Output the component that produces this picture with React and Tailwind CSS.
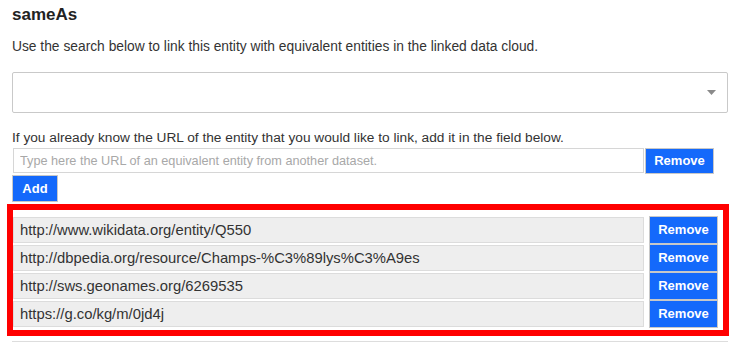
import React, { useState } from 'react'

const links = [
  'http://www.wikidata.org/entity/Q550',
  'http://dbpedia.org/resource/Champs-%C3%89lys%C3%A9es',
  'http://sws.geonames.org/6269535',
  'https://g.co/kg/m/0jd4j',
]

function BlueButton({ children, className = '', onClick }) {
  return (
    <button
      type="button"
      onClick={onClick}
      className={`flex items-center justify-center border border-[#c8c8c8] bg-[#1469fb] text-[13px] font-semibold text-white ${className}`}
    >
      {children}
    </button>
  )
}

export default function App() {
  const [items, setItems] = useState(links)
  const [url, setUrl] = useState('')

  const addLink = () => {
    if (!url.trim()) return
    setItems((prev) => [...prev, url.trim()])
    setUrl('')
  }

  return (
    <div
      className="h-[347px] w-[740px] overflow-hidden bg-white px-[12px] pt-[5px] text-[#333]"
      style={{ fontFamily: '"Liberation Sans", Arial, sans-serif' }}
    >
      <h2 className="text-[17px] font-bold leading-[20px] text-[#222]">sameAs</h2>

      <p className="mt-[13px] text-[13.8px] leading-[18px]">
        Use the search below to link this entity with equivalent entities in the linked data cloud.
      </p>

      <div className="mt-[16px] flex h-[41px] w-[716px] items-center justify-end rounded-[2px] border border-[#c9c9c9] bg-white pr-[11px]">
        <svg width="9" height="5" viewBox="0 0 9 5">
          <path d="M0 0 L9 0 L4.5 5 Z" fill="#8a8a8a" />
        </svg>
      </div>

      <p className="mt-[16px] text-[13.7px] leading-[18px]">
        If you already know the URL of the entity that you would like to link, add it in the field below.
      </p>

      <div className="mt-px ml-px flex h-[26px] gap-px">
        <input
          value={url}
          onChange={(e) => setUrl(e.target.value)}
          placeholder="Type here the URL of an equivalent entity from another dataset."
          className="h-[25px] w-[631px] border border-[#d6d6d6] bg-white px-[6px] text-[12.7px] text-[#333] outline-none placeholder:text-[#a8a8a8]"
        />
        <BlueButton className="h-[26px] w-[69px]" onClick={() => setUrl('')}>
          Remove
        </BlueButton>
      </div>

      <BlueButton className="mt-px h-[27px] w-[46px]" onClick={addLink}>
        Add
      </BlueButton>

      <div className="ml-[-5px] mt-[2px] w-[722px] border-[6px] border-[#ff0000] pb-[2px] pr-[5px] pt-[6px]">
        {items.map((item) => (
          <div key={item} className="flex h-[28px] items-center gap-[5px]">
            <div className="flex h-[26px] w-[631px] items-center border border-[#dcdcdc] bg-[#eeeeee] px-[6px] text-[14.8px] text-[#333]">
              {item}
            </div>
            <BlueButton
              className="h-[28px] w-[69px]"
              onClick={() => setItems((prev) => prev.filter((x) => x !== item))}
            >
              Remove
            </BlueButton>
          </div>
        ))}
      </div>

      <div className="mt-[5px] w-[716px] border-t border-[#dddddd]" />
    </div>
  )
}
